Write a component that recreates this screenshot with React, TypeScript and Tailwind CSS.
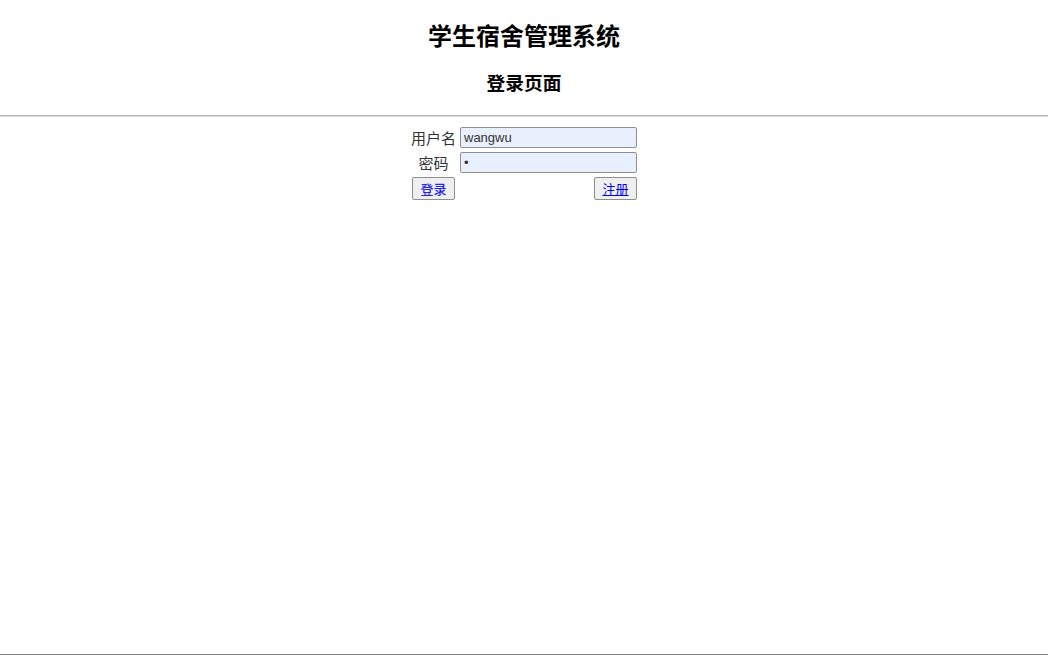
const cjk = "font-['Microsoft_YaHei','Noto_Sans_CJK_SC',sans-serif]"

export default function App() {
  return (
    <div className={`flex min-h-[655px] flex-col bg-white text-black ${cjk}`}>
      <h2 className="mt-[19px] mb-0 text-center text-[24px] font-bold leading-[1.32]">学生宿舍管理系统</h2>
      <h3 className="mt-[19px] mb-0 text-center text-[18.72px] font-bold leading-[1.32]">登录页面</h3>
      <hr className="mt-[21px] border-t-[1px] border-b-[1px] border-t-[#b8b8b8] border-b-[#d8d8d8]" />
      <form className="mt-[7px] flex justify-center">
        <table className="border-separate border-spacing-[2px] text-[15px]">
          <tbody>
            <tr>
              <td className="h-[23px] px-[1px] text-center leading-[21px] text-[#333]">用户名</td>
              <td className="h-[23px] px-[1px]">
                <input
                  type="text"
                  defaultValue="wangwu"
                  className="block h-[21px] w-[177px] rounded-[2px] border border-[#8f8f8f] bg-[#e8f0fe] px-[3px] font-['Liberation_Sans',sans-serif] text-[13px] text-[#333]"
                />
              </td>
            </tr>
            <tr>
              <td className="h-[23px] px-[1px] text-center leading-[21px] text-[#333]">密码</td>
              <td className="h-[23px] px-[1px]">
                <input
                  type="password"
                  defaultValue="1"
                  className="block h-[21px] w-[177px] rounded-[2px] border border-[#8f8f8f] bg-[#e8f0fe] px-[3px] font-['Liberation_Sans',sans-serif] text-[13px] text-[#333]"
                />
              </td>
            </tr>
            <tr>
              <td className="h-[25px] px-[1px] text-center">
                <button
                  type="button"
                  className="h-[23px] w-[43px] rounded-[2px] border border-[#8f8f8f] bg-[#efefef] text-[13px] font-medium leading-[21px] text-[#2222ee] no-underline"
                >
                  登录
                </button>
              </td>
              <td className="h-[25px] px-[1px] text-right">
                <button
                  type="button"
                  className="h-[23px] w-[43px] rounded-[2px] border border-[#8f8f8f] bg-[#efefef] text-[13px] leading-[21px] text-[#0000ee] underline"
                >
                  注册
                </button>
              </td>
            </tr>
          </tbody>
        </table>
      </form>
      <div className="mt-auto h-[2px] border-b border-[#808080]" />
    </div>
  )
}
